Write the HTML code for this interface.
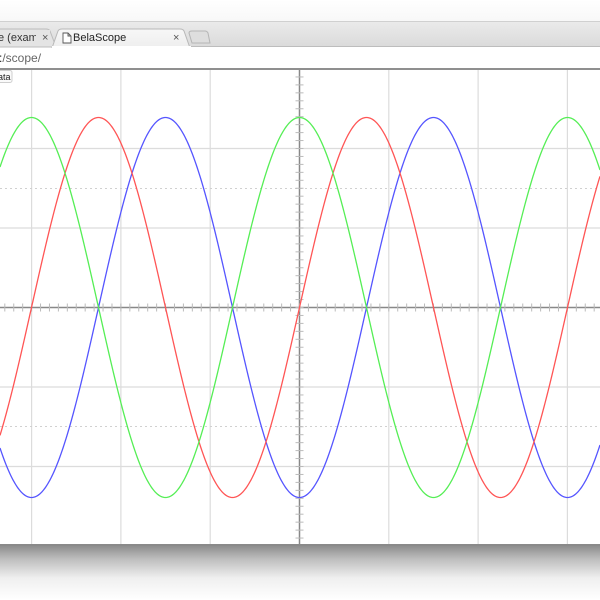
<!DOCTYPE html>
<html><head><meta charset="utf-8"><style>
html,body{margin:0;padding:0;width:600px;height:600px;overflow:hidden;background:#fff;font-family:"Liberation Sans",sans-serif}
</style></head><body>
<svg id="s" width="600" height="600" xmlns="http://www.w3.org/2000/svg">
<defs>
<linearGradient id="tb" x1="0" y1="0" x2="0" y2="1"><stop offset="0" stop-color="#ebebeb"/><stop offset="1" stop-color="#dadada"/></linearGradient>
<linearGradient id="at" x1="0" y1="0" x2="0" y2="1"><stop offset="0" stop-color="#f7f7f7"/><stop offset="1" stop-color="#eeeeee"/></linearGradient>
<linearGradient id="sh" x1="0" y1="0" x2="0" y2="1"><stop offset="0" stop-color="#8a8a8a"/><stop offset="0.25" stop-color="#bdbdbd"/><stop offset="0.6" stop-color="#efefef"/><stop offset="1" stop-color="#fff"/></linearGradient>
<linearGradient id="top" x1="0" y1="0" x2="0" y2="1"><stop offset="0" stop-color="#fff"/><stop offset="1" stop-color="#f8f8f8"/></linearGradient>
</defs>
<rect x="0" y="0" width="600" height="21" fill="url(#top)"/>
<rect x="0" y="21" width="600" height="26" fill="url(#tb)"/>
<line x1="0" y1="21.5" x2="600" y2="21.5" stroke="#d0d0d0"/>
<line x1="0" y1="46.5" x2="600" y2="46.5" stroke="#bdbdbd"/>
<path d="M-10 47 L-10 30 Q-10 29 -9 29 L46 29 Q49 29 50 31 L56 47 Z" fill="#e4e4e4" stroke="#bcbcbc"/>
<text x="-2" y="41" font-size="11" fill="#333">e (exampl</text>
<rect x="36" y="30" width="14" height="15" fill="#e4e4e4"/>
<text x="42" y="41" font-size="11" fill="#555">×</text>
<path d="M52 48 L58 31 Q59 29 62 29 L180 29 Q183 29 184 31 L190 48 Z" fill="url(#at)" stroke="#b8b8b8"/>
<rect x="52" y="46" width="139" height="3" fill="#fff"/>
<path d="M63 33 H68 L71 36 V43 H63 Z M68 33 V36 H71" fill="#fff" stroke="#555" stroke-width="0.9"/>
<text x="73" y="41" font-size="11" fill="#222">BelaScope</text>
<text x="173" y="41" font-size="11" fill="#555">×</text>
<path d="M189 33 Q189 31 192 31 L205 31 Q207 31 208 33 L210 43 L192 43 Z" fill="#dedede" stroke="#b5b5b5"/>
<rect x="0" y="48" width="600" height="20" fill="#fff"/>
<text x="-1" y="62" font-size="12" fill="#666"><tspan fill="#222">:</tspan>/scope/</text>
<rect x="0" y="68" width="600" height="2" fill="#8f8f8f"/>
<rect x="0" y="70" width="600" height="476" fill="#fff"/>
<g id="grid" stroke="#dcdcdc" stroke-width="1.2"></g>
<g id="waves" fill="none" stroke-width="1.3"></g>
<rect x="0" y="545" width="600" height="55" fill="url(#sh)"/>
<rect x="0" y="544" width="600" height="2" fill="#8a8a8a"/>
<rect x="-5" y="70.5" width="17" height="12" fill="#fafafa" stroke="#cfcfcf" rx="2"/>
<text x="-2" y="80" font-size="9" fill="#222">ata</text>
</svg>
<script>
var ns="http://www.w3.org/2000/svg";
var g=document.getElementById('grid'),w=document.getElementById('waves');
function L(x1,y1,x2,y2,st,sw,da){var l=document.createElementNS(ns,'line');l.setAttribute('x1',x1);l.setAttribute('y1',y1);l.setAttribute('x2',x2);l.setAttribute('y2',y2);if(st)l.setAttribute('stroke',st);if(sw)l.setAttribute('stroke-width',sw);if(da)l.setAttribute('stroke-dasharray',da);g.appendChild(l);}
var cx=299.5,cy=307.5,dx=89.3;
for(var i=-4;i<=4;i++){if(i==0)continue;var x=cx+i*dx;if(x>0&&x<600)L(x,70,x,545);}
[-159,-79.5,79.5,159].forEach(function(d){L(0,cy+d,600,cy+d);});
[-119,119].forEach(function(d){L(0,cy+d,600,cy+d,'#d0d0d0',1,'2,3');});
L(0,cy,600,cy,'#888',1.5);L(cx,70,cx,545,'#888',1.5);
for(var x=cx-dx*4;x<600;x+=dx/10){L(x,cy-4,x,cy+4,'#bbb',1);}
for(var y=cy;y>70;y-=7.95){L(cx-4,y,cx+4,y,'#bbb',1);}
for(var y=cy;y<545;y+=7.95){L(cx-4,y,cx+4,y,'#bbb',1);}
var P=268,A=190;
function wave(col,ph,sg){var d='';for(var x=0;x<=600;x+=1){var y=cy-sg*A*Math.cos(2*Math.PI*(x-cx-ph)/P);d+=(x?'L':'M')+x+' '+y.toFixed(2);}var p=document.createElementNS(ns,'path');p.setAttribute('d',d);p.setAttribute('stroke',col);w.appendChild(p);}
wave('#5555ff',0,-1);wave('#ff5555',67,1);wave('#55ee55',0,1);
</script>
</body></html>
